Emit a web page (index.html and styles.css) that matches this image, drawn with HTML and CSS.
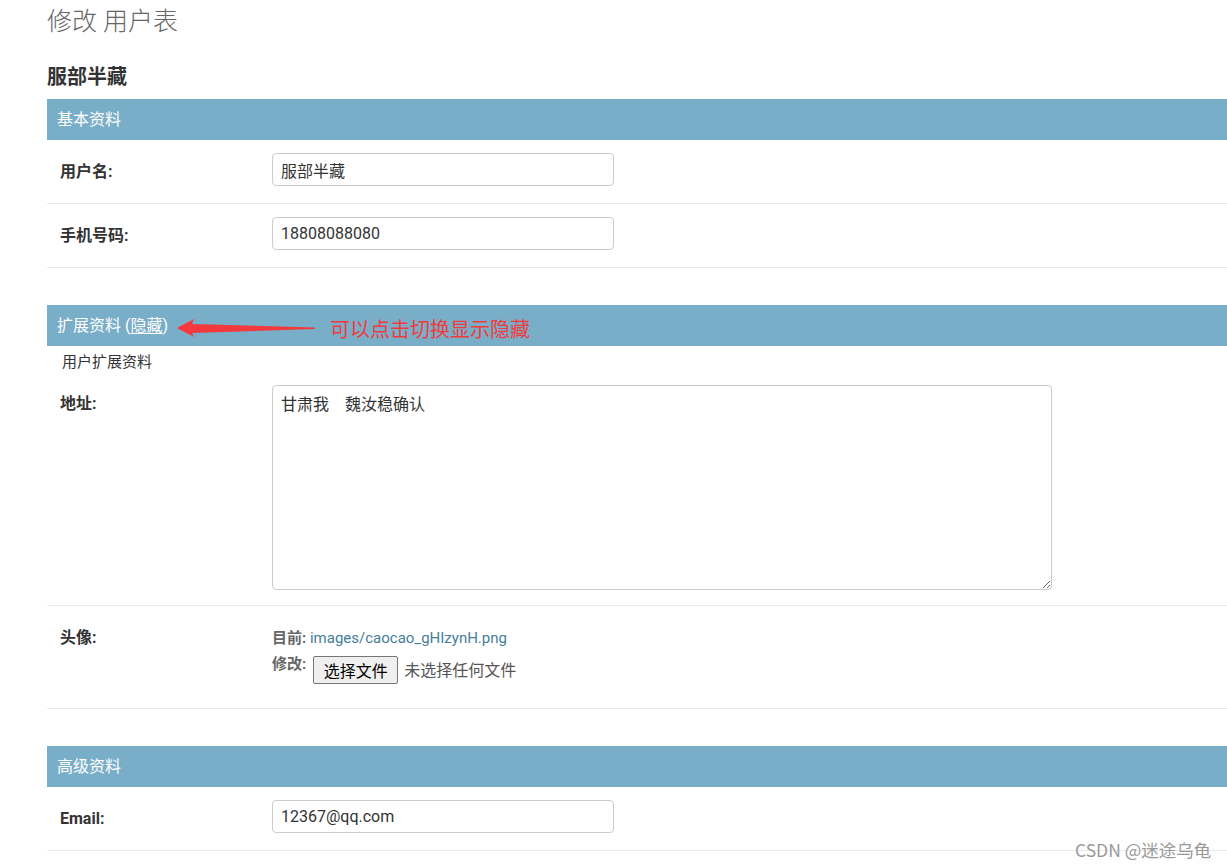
FILE: index.html
```html
<!DOCTYPE html>
<html lang="zh-CN">
<head>
<meta charset="utf-8">
<title>修改 用户表</title>
<link rel="stylesheet" href="styles.css">
</head>
<body>
<div class="content">
  <h1 class="title">修改 用户表</h1>
  <h2 class="object-name">服部半藏</h2>

  <section class="fieldset">
    <div class="fs-head">基本资料</div>
    <div class="row">
      <label class="label">用户名:</label>
      <div class="field"><input class="text-input" type="text" value="服部半藏"></div>
    </div>
    <div class="row">
      <label class="label">手机号码:</label>
      <div class="field"><input class="text-input" type="text" value="18808088080"></div>
    </div>
  </section>

  <section class="fieldset">
    <div class="fs-head">扩展资料 (<a class="collapse-link" href="#">隐藏</a>)</div>
    <div class="description">用户扩展资料</div>
    <div class="row row-text">
      <label class="label">地址:</label>
      <div class="field"><textarea class="textarea">甘肃我　魏汝稳确认</textarea></div>
    </div>
    <div class="row row-file">
      <label class="label">头像:</label>
      <div class="field file-field">
        <p class="current"><span class="file-key">目前:</span> <a class="file-link" href="#">images/caocao_gHIzynH.png</a></p>
        <div class="change">
          <span class="file-key change-key">修改:</span>
          <button class="file-btn" type="button">选择文件</button>
          <span class="no-file">未选择任何文件</span>
        </div>
      </div>
    </div>
  </section>

  <section class="fieldset">
    <div class="fs-head">高级资料</div>
    <div class="row">
      <label class="label">Email:</label>
      <div class="field"><input class="text-input" type="text" value="12367@qq.com"></div>
    </div>
  </section>
</div>

<div class="annotation">
  <svg class="arrow" width="150" height="24" viewBox="0 0 150 24">
    <polygon points="2,11 19,2 17,7 140,10.5 140,12 17,16 19,20" fill="#f23a3c"/>
  </svg>
  <span class="annotation-text">可以点击切换显示隐藏</span>
</div>

<div class="watermark">CSDN @迷途乌龟</div>
</body>
</html>
```

FILE: styles.css
```css
html, body {
  margin: 0;
  padding: 0;
  background: #fff;
}

body {
  font-family: Roboto, "Noto Sans CJK SC", sans-serif;
  color: #333;
  width: 1227px;
  height: 868px;
  overflow: hidden;
  position: relative;
}

.content {
  padding-left: 47px;
}

.title {
  margin: 0;
  padding-top: 6px;
  height: 50px;
  font-size: 25px;
  line-height: 32px;
  font-weight: 300;
  color: #666;
}

.object-name {
  margin: 0;
  padding-top: 6px;
  height: 37px;
  font-size: 20px;
  line-height: 30px;
  font-weight: 700;
  color: #333;
}

.fieldset {
  margin-bottom: 37px;
}

.fs-head {
  height: 41px;
  line-height: 41px;
  background: #79aec8;
  color: #fff;
  font-size: 16px;
  padding-left: 10px;
}

.collapse-link {
  color: #fff;
  text-decoration: underline;
  text-decoration-thickness: 1px;
  text-underline-offset: 2px;
}

.description {
  font-size: 15px;
  line-height: 18px;
  color: #333;
  padding: 7px 0 1px 15px;
}

.row {
  display: flex;
  align-items: flex-start;
  padding: 13px 0 17px 13px;
  border-bottom: 1px solid #e8e8e8;
}

.row-text {
  padding-bottom: 15px;
}

.label {
  width: 212px;
  flex: none;
  font-size: 16px;
  font-weight: 700;
  line-height: 28px;
  padding-top: 5px;
  color: #333;
}

.field {
  flex: none;
}

.text-input {
  box-sizing: border-box;
  width: 342px;
  height: 33px;
  border: 1px solid #ccc;
  border-radius: 4px;
  padding: 0 8px;
  font-family: Roboto, "Noto Sans CJK SC", sans-serif;
  font-size: 16px;
  color: #333;
  margin: 0;
  display: block;
}

.textarea {
  box-sizing: border-box;
  width: 780px;
  height: 205px;
  border: 1px solid #ccc;
  border-radius: 4px;
  padding: 7px 8px;
  font-family: Roboto, "Noto Sans CJK SC", sans-serif;
  font-size: 16px;
  line-height: 24px;
  color: #333;
  margin: 0;
  display: block;
  resize: both;
}

.row-file {
  padding-bottom: 22px;
}

.file-field {
  padding-top: 3px;
}

.current {
  margin: 0;
  font-size: 15px;
  line-height: 32px;
  height: 34px;
}

.file-key {
  font-weight: 700;
  color: #666;
  font-size: 15px;
}

.file-link {
  color: #447e9b;
  text-decoration: none;
}

.change {
  display: flex;
  align-items: flex-start;
  gap: 6px;
}

.change-key {
  line-height: 16px;
  margin-top: 0;
  margin-right: 1px;
}

.file-btn {
  box-sizing: border-box;
  height: 28px;
  width: 85px;
  padding: 0;
  border: 1px solid #767676;
  border-radius: 2px;
  background: #efefef;
  color: #000;
  font-family: "Noto Sans CJK SC", sans-serif;
  font-size: 16px;
  margin: 0;
}

.no-file {
  font-size: 16px;
  line-height: 30px;
  color: #555;
}

.annotation {
  position: absolute;
  left: 175px;
  top: 315px;
  display: flex;
  align-items: center;
  gap: 5px;
}

.arrow {
  display: block;
}

.annotation-text {
  font-family: "Noto Sans CJK SC", sans-serif;
  font-size: 20px;
  line-height: 28px;
  color: #f23a3c;
}

.watermark {
  position: absolute;
  left: 1075px;
  top: 837px;
  font-family: "Noto Sans CJK SC", sans-serif;
  font-size: 17.5px;
  line-height: 26px;
  color: #999;
  text-shadow: 0 0 1px #fff;
}
```
